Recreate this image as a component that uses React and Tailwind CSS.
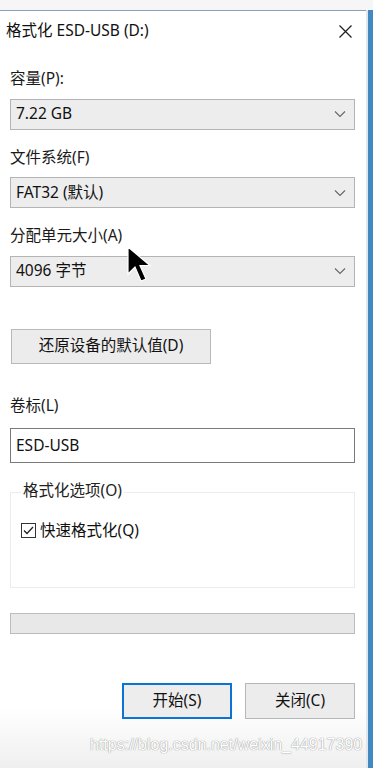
import React from "react";

const font = { fontFamily: '"Noto Sans", "Noto Sans CJK SC", sans-serif' };

function Chevron() {
  return (
    <svg width="12" height="8" viewBox="0 0 12 8" fill="none" stroke="#666" strokeWidth="1.1">
      <path d="M1 1.5 L6 6.5 L11 1.5" />
    </svg>
  );
}

function Select({ value }) {
  return (
    <div className="h-[31px] w-[345px] flex items-center justify-between pl-[5px] pr-[8px] bg-[#ededed] border border-[#b4b4b4] text-[15.5px] text-[#111]">
      <span>{value}</span>
      <Chevron />
    </div>
  );
}

function Label({ children, className = "" }) {
  return <div className={`text-[15.5px] text-[#1a1a1a] leading-none ${className}`}>{children}</div>;
}

export default function App() {
  return (
    <div className="relative w-[373px] h-[768px] bg-[#f3f3f3] overflow-hidden" style={font}>
      <div className="h-[10px] bg-[#f6f6f6]" />
      <div className="flex h-[758px]">
        <div className="flex-1 flex flex-col border-t border-[#8aa0b8] bg-gradient-to-b from-white from-[92%] to-[#efefef]">
          {/* title bar */}
          <div className="flex items-center justify-between h-[40px] pl-[6px] pr-[14px]">
            <span className="text-[15.5px] text-[#111]">格式化 ESD-USB (D:)</span>
            <svg width="13" height="13" viewBox="0 0 13 13" stroke="#222" strokeWidth="1.3">
              <path d="M0.5 0.5 L12.5 12.5 M12.5 0.5 L0.5 12.5" />
            </svg>
          </div>

          <div className="flex flex-col pl-[10px]">
            <Label className="mt-[20px]">容量(P):</Label>
            <div className="mt-[12px]"><Select value="7.22 GB" /></div>

            <Label className="mt-[20px]">文件系统(F)</Label>
            <div className="mt-[12px]"><Select value="FAT32 (默认)" /></div>

            <Label className="mt-[20px]">分配单元大小(A)</Label>
            <div className="mt-[12px]"><Select value="4096 字节" /></div>

            <button className="mt-[42px] ml-[1px] w-[200px] h-[35px] bg-[#ececec] border border-[#b9b9b9] text-[15.5px] text-[#111]">
              还原设备的默认值(D)
            </button>

            <Label className="mt-[34px]">卷标(L)</Label>
            <div className="mt-[15px] w-[345px] h-[35px] flex items-center pl-[5px] bg-white border border-[#7a7a7a] text-[15.5px] text-[#111]">
              ESD-USB
            </div>

            {/* group box */}
            <div className="relative mt-[29px] w-[345px] h-[96px] border border-[#ececec]">
              <span className="absolute -top-[10px] left-[10px] px-[2px] bg-white text-[15.5px] leading-none text-[#222]">
                格式化选项(O)
              </span>
              <div className="flex items-center mt-[30px] ml-[10px] gap-[4px]">
                <div className="w-[15px] h-[15px] border border-[#333] bg-white flex items-center justify-center">
                  <svg width="11" height="9" viewBox="0 0 11 9" fill="none" stroke="#222" strokeWidth="1.3">
                    <path d="M1 4.5 L4 7.5 L10 1" />
                  </svg>
                </div>
                <span className="text-[15.5px] leading-none text-[#111]">快速格式化(Q)</span>
              </div>
            </div>

            {/* progress */}
            <div className="mt-[25px] w-[345px] h-[21px] bg-[#e8e8e8] border border-[#bcbcbc]" />

            <div className="flex justify-end gap-[13px] mt-[49px] w-[345px]">
              <button className="w-[110px] h-[36px] bg-[#ededed] border-2 border-[#0a74d4] text-[15.5px] text-[#111]">
                开始(S)
              </button>
              <button className="w-[110px] h-[36px] bg-[#ececec] border border-[#b6b6b6] text-[15.5px] text-[#111]">
                关闭(C)
              </button>
            </div>

            <div
              className="mt-[18px] pl-[80px] text-[16px] leading-none text-white whitespace-nowrap"
              style={{ fontFamily: '"Liberation Sans", sans-serif', textShadow: "0 0 1px #9a9a9a, 0 0 1px #9a9a9a" }}
            >
              https://blog.csdn.net/weixin_44917390
            </div>
          </div>
        </div>
        <div className="w-[2px] bg-[#dfe6ec]" />
        <div className="w-[5px] bg-[#4289c4]" />
      </div>

      {/* mouse cursor */}
      <svg className="absolute left-[127px] top-[246px]" width="26" height="38" viewBox="0 0 26 38">
        <path d="M1 1 L1 28 L8 21 L14 35 L19 33 L13 19.5 L23 19.5 Z" fill="#000" stroke="#fff" strokeWidth="1.2" />
      </svg>
    </div>
  );
}
